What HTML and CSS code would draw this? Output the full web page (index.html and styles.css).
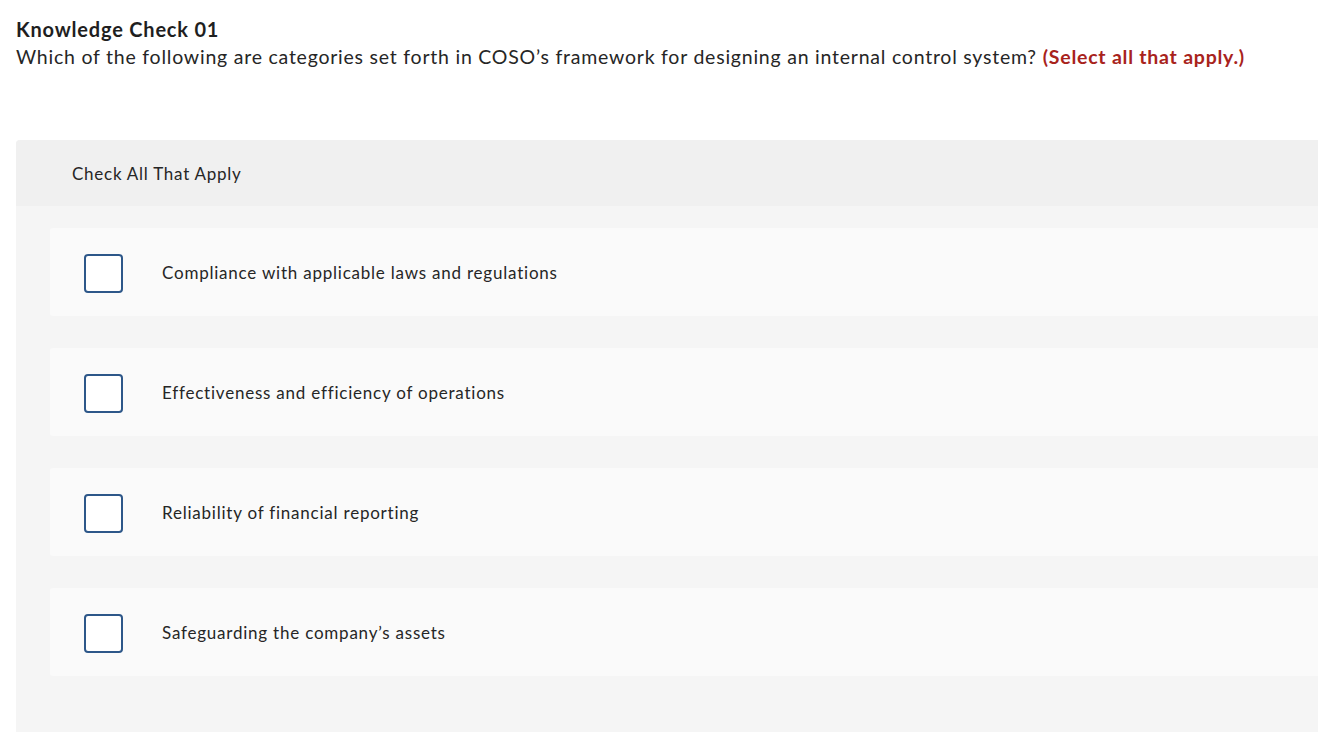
FILE: index.html
```html
<!DOCTYPE html>
<html>
<head>
<meta charset="utf-8">
<link rel="stylesheet" href="styles.css">
</head>
<body>
<div class="page">
  <div class="intro">
    <h1 class="title">Knowledge Check 01</h1>
    <p class="question">Which of the following are categories set forth in COSO’s framework for designing an internal control system? <strong class="hint">(Select all that apply.)</strong></p>
  </div>
  <section class="panel">
    <div class="panel-head">Check All That Apply</div>
    <div class="panel-body">
      <label class="option"><span class="box"></span><span class="label">Compliance with applicable laws and regulations</span></label>
      <label class="option"><span class="box"></span><span class="label">Effectiveness and efficiency of operations</span></label>
      <label class="option"><span class="box"></span><span class="label">Reliability of financial reporting</span></label>
      <label class="option"><span class="box"></span><span class="label">Safeguarding the company’s assets</span></label>
    </div>
  </section>
</div>
</body>
</html>
```
FILE: styles.css
```css
html, body {
  margin: 0;
  padding: 0;
  overflow: hidden;
  background: #ffffff;
}
body {
  font-family: Lato, "Liberation Sans", sans-serif;
  color: #262626;
}
.page {
  padding: 17px 0 0 16px;
}
.intro {
  height: 123px;
}
.title {
  margin: 0;
  font-size: 20px;
  line-height: 24px;
  font-weight: 700;
  letter-spacing: 0.8px;
  color: #1f1f1f;
}
.question {
  margin: 0;
  font-size: 19.5px;
  line-height: 31px;
  letter-spacing: 0.77px;
}
.hint {
  color: #a8231c;
  font-weight: 700;
}
.panel {
  margin-right: -40px;
  background: #f5f5f5;
  border-radius: 4px 0 0 0;
  min-height: 640px;
}
.panel-head {
  height: 66px;
  display: flex;
  align-items: center;
  padding-left: 56px;
  background: #f0f0f0;
  border-radius: 4px 0 0 0;
  font-size: 17px;
  letter-spacing: 0.75px;
  color: #262626;
}
.panel-body {
  padding: 22px 0 0 34px;
  display: flex;
  flex-direction: column;
  gap: 32px;
}
.option {
  height: 88px;
  display: flex;
  align-items: center;
  padding-left: 34px;
  background: #fafafa;
  border-radius: 3px 0 0 3px;
  font-size: 17px;
  letter-spacing: 0.78px;
}
.box {
  width: 35px;
  height: 35px;
  border: 2px solid #2d5789;
  border-radius: 4px;
  background: #ffffff;
  margin: 3px 39px 0 0;
  flex: none;
}
.label {
  color: #262626;
}
```
